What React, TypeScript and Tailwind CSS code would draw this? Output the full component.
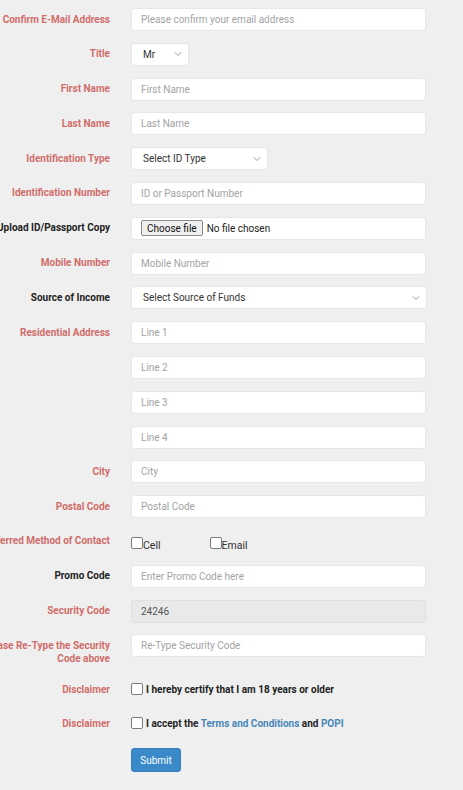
import React from "react";

const RED = "text-[#cf6d6b]";

function Chevron() {
  return (
    <svg width="8" height="5" viewBox="0 0 8 5" className="absolute right-[6px] top-1/2 -translate-y-1/2">
      <path d="M0.8 0.8 L4 4 L7.2 0.8" fill="none" stroke="#9a9a9a" strokeWidth="1" />
    </svg>
  );
}

function Row({ label, red = true, children, twoLine = false }: { label: string; red?: boolean; children: React.ReactNode; twoLine?: boolean }) {
  return (
    <div className="flex items-start">
      <div
        className={`w-[136px] -ml-[26px] shrink-0 text-right font-bold text-[10px] ${twoLine ? "leading-[13px] pt-[5px]" : "leading-[14px] pt-[4.5px] whitespace-nowrap"} ${red ? RED : "text-[#222]"}`}
      >
        {label}
      </div>
      <div className="ml-[21px] flex-1">{children}</div>
    </div>
  );
}

function TextInput({ placeholder, value, disabled = false }: { placeholder?: string; value?: string; disabled?: boolean }) {
  return (
    <div
      className={`w-[295px] h-[23px] rounded-[3px] border flex items-center pl-[9px] text-[10px] ${
        disabled ? "bg-[#e9e9e9] border-[#e0e0e0] text-[#555]" : "bg-white border-[#e6e6e6] text-[#a3a3a3]"
      }`}
    >
      {value ?? placeholder}
    </div>
  );
}

function Select({ text, width }: { text: string; width: string }) {
  return (
    <div className={`relative ${width} h-[23px] rounded-[3px] border border-[#e6e6e6] bg-white flex items-center pl-[11px] text-[10px] text-[#333]`}>
      {text}
      <Chevron />
    </div>
  );
}

function Box() {
  return <span className="inline-block w-[12px] h-[12px] rounded-[2px] border border-[#7a7a7a] bg-white shrink-0" />;
}

export default function App() {
  return (
    <div className="w-[463px] min-h-[790px] bg-[#efefef] overflow-hidden font-['Roboto',sans-serif]">
      <div className="pt-[8px] flex flex-col gap-[11.8px]">
        <Row label="Confirm E-Mail Address">
          <TextInput placeholder="Please confirm your email address" />
        </Row>
        <Row label="Title">
          <Select text="Mr" width="w-[58px]" />
        </Row>
        <Row label="First Name">
          <TextInput placeholder="First Name" />
        </Row>
        <Row label="Last Name">
          <TextInput placeholder="Last Name" />
        </Row>
        <Row label="Identification Type">
          <Select text="Select ID Type" width="w-[137px]" />
        </Row>
        <Row label="Identification Number">
          <TextInput placeholder="ID or Passport Number" />
        </Row>
        <Row label="Upload ID/Passport Copy" red={false}>
          <div className="w-[295px] h-[23px] rounded-[3px] border border-[#e6e6e6] bg-white flex items-center pl-[9px] text-[10px] text-[#222]">
            <span className="h-[16px] px-[5px] flex items-center border border-[#8a8a8a] bg-[#efefef] rounded-[2px] text-[10px] text-[#111]">
              Choose file
            </span>
            <span className="ml-[4px]">No file chosen</span>
          </div>
        </Row>
        <Row label="Mobile Number">
          <TextInput placeholder="Mobile Number" />
        </Row>
        <Row label="Source of Income" red={false}>
          <Select text="Select Source of Funds" width="w-[296px]" />
        </Row>
        <Row label="Residential Address">
          <TextInput placeholder="Line 1" />
        </Row>
        <Row label="">
          <TextInput placeholder="Line 2" />
        </Row>
        <Row label="">
          <TextInput placeholder="Line 3" />
        </Row>
        <Row label="">
          <TextInput placeholder="Line 4" />
        </Row>
        <Row label="City">
          <TextInput placeholder="City" />
        </Row>
        <Row label="Postal Code">
          <TextInput placeholder="Postal Code" />
        </Row>
        <Row label="Preferred Method of Contact">
          <div className="h-[23px] flex items-start pt-[7px] text-[10.5px] text-[#333]">
            <span className="flex items-start">
              <Box />
              <span className="mt-[2px] leading-[14px]">Cell</span>
            </span>
            <span className="flex items-start ml-[49px]">
              <Box />
              <span className="mt-[2px] leading-[14px]">Email</span>
            </span>
          </div>
        </Row>
        <Row label="Promo Code" red={false}>
          <TextInput placeholder="Enter Promo Code here" />
        </Row>
        <Row label="Security Code">
          <TextInput value="24246" disabled />
        </Row>
        <Row label="Please Re-Type the Security Code above" twoLine>
          <TextInput placeholder="Re-Type Security Code" />
        </Row>
      </div>

      <div className="mt-[14px] flex items-center h-[20px]">
        <div className={`w-[136px] -ml-[26px] shrink-0 text-right font-bold text-[10px] ${RED}`}>Disclaimer</div>
        <div className="ml-[21px] flex items-center text-[10px] font-bold text-[#222]">
          <Box />
          <span className="ml-[3px]">I hereby certify that I am 18 years or older</span>
        </div>
      </div>
      <div className="mt-[14px] flex items-center h-[20px]">
        <div className={`w-[136px] -ml-[26px] shrink-0 text-right font-bold text-[10px] ${RED}`}>Disclaimer</div>
        <div className="ml-[21px] flex items-center text-[10px] font-bold text-[#222]">
          <Box />
          <span className="ml-[3px]">
            I accept the <span className="text-[#4787b8]">Terms and Conditions</span> and{" "}
            <span className="text-[#4787b8]">POPI</span>
          </span>
        </div>
      </div>
      <div className="mt-[15px] flex">
        <div className="w-[136px] -ml-[26px] shrink-0" />
        <button className="ml-[21px] w-[50px] h-[24px] rounded-[3px] bg-[#3a8ac9] border border-[#3580bd] text-white text-[10px]">
          Submit
        </button>
      </div>
    </div>
  );
}
